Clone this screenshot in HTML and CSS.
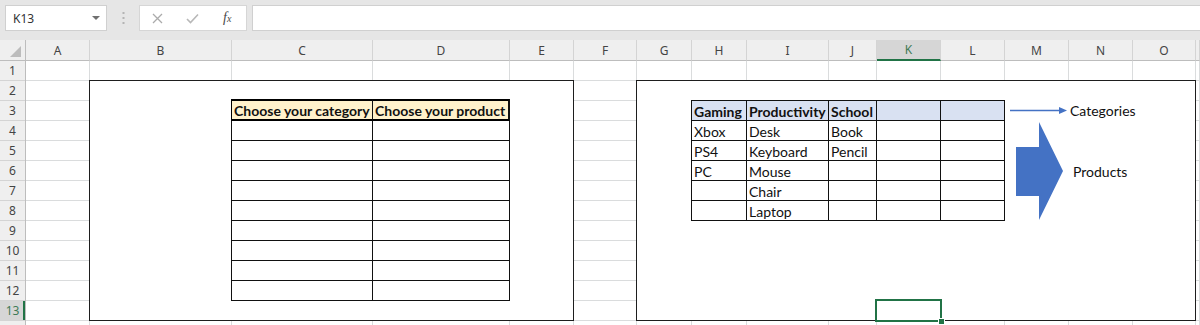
FILE: index.html
```html
<!DOCTYPE html>
<html lang="en">
<head>
    <meta charset="UTF-8">
    <meta name="viewport" content="width=device-width, initial-scale=1.0">
    <title>Category and product picker</title>
    <link rel="stylesheet" href="styles.css">
</head>
<body>
    <div class="toolbar">
        <div class="name-box">
            <span>K13</span>
            <svg class="caret" width="8" height="4" viewBox="0 0 8 4"><path d="M0 0H8L4 4Z" fill="#707070"/></svg>
        </div>
        <div class="grip">
            <svg width="3" height="12" viewBox="0 0 3 12">
                <rect x="0.5" y="0" width="2" height="2" fill="#b4b4b4"/>
                <rect x="0.5" y="5" width="2" height="2" fill="#b4b4b4"/>
                <rect x="0.5" y="10" width="2" height="2" fill="#b4b4b4"/>
            </svg>
        </div>
        <div class="fx-buttons">
            <svg width="11" height="11" viewBox="0 0 11 11"><path d="M1 1L10 10M10 1L1 10" stroke="#ababab" stroke-width="1.3" fill="none"/></svg>
            <svg width="13" height="11" viewBox="0 0 13 11"><path d="M1 6L4.5 9.5L12 1.5" stroke="#b8b8b8" stroke-width="1.6" fill="none"/></svg>
            <span class="fx">f<span>x</span></span>
        </div>
        <div class="formula"></div>
    </div>

    <div class="sheet">
        <div class="corner">
            <svg width="11" height="11" viewBox="0 0 11 11"><path d="M11 0V11H0Z" fill="#bcbcbc"/></svg>
        </div>
        <div class="col-head">A</div>
        <div class="col-head">B</div>
        <div class="col-head">C</div>
        <div class="col-head">D</div>
        <div class="col-head">E</div>
        <div class="col-head">F</div>
        <div class="col-head">G</div>
        <div class="col-head">H</div>
        <div class="col-head">I</div>
        <div class="col-head">J</div>
        <div class="col-head active">K</div>
        <div class="col-head">L</div>
        <div class="col-head">M</div>
        <div class="col-head">N</div>
        <div class="col-head">O</div>
        <div class="col-head"></div>

        <div class="row-heads">
            <div>1</div><div>2</div><div>3</div><div>4</div><div>5</div><div>6</div><div>7</div>
            <div>8</div><div>9</div><div>10</div><div>11</div><div>12</div>
            <div class="active">13</div><div></div>
        </div>

        <div class="col"></div><div class="col"></div><div class="col"></div><div class="col"></div>
        <div class="col"></div><div class="col"></div><div class="col"></div><div class="col"></div>
        <div class="col"></div><div class="col"></div><div class="col"></div><div class="col"></div>
        <div class="col"></div><div class="col"></div><div class="col"></div><div class="col"></div>

        <!-- shapes floating over the grid -->
        <div class="shape shape-left">
            <div class="pick">
                <div class="head">Choose your category</div>
                <div class="head">Choose your product</div>
                <div></div><div></div>
                <div></div><div></div>
                <div></div><div></div>
                <div></div><div></div>
                <div></div><div></div>
                <div></div><div></div>
                <div></div><div></div>
                <div></div><div></div>
                <div></div><div></div>
            </div>
        </div>

        <div class="shape shape-right">
            <div class="lists">
                <div class="head">Gaming</div>
                <div class="head">Productivity</div>
                <div class="head">School</div>
                <div class="head"></div>
                <div class="head"></div>

                <div>Xbox</div><div>Desk</div><div>Book</div><div></div><div></div>
                <div>PS4</div><div>Keyboard</div><div>Pencil</div><div></div><div></div>
                <div>PC</div><div>Mouse</div><div></div><div></div><div></div>
                <div></div><div>Chair</div><div></div><div></div><div></div>
                <div></div><div>Laptop</div><div></div><div></div><div></div>
            </div>
            <div class="legend">
                <div class="legend-row">
                    <svg width="57" height="9" viewBox="0 0 57 9">
                        <path d="M0 4.5H50" stroke="#4472c4" stroke-width="1.5"/>
                        <path d="M49 1L57 4.5L49 8Z" fill="#4472c4"/>
                    </svg>
                    <span>Categories</span>
                </div>
                <div class="legend-row products">
                    <svg width="47" height="99" viewBox="0 0 47 99">
                        <path d="M0 25H23V0L47 49L23 98V74H0Z" fill="#4472c4"/>
                    </svg>
                    <span>Products</span>
                </div>
            </div>
        </div>

        <div class="selection"></div>
    </div>
</body>
</html>
```

FILE: styles.css
```css
body {
    margin: 0;
    width: 1200px;
    height: 325px;
    overflow: hidden;
    background: #e6e6e6;
    font-family: "Noto Sans", "Open Sans", sans-serif;
    color: #333;
}

/* formula bar */
.toolbar {
    height: 40px;
    box-sizing: border-box;
    padding: 5px 0 0 5px;
    display: flex;
    align-items: flex-start;
}

.name-box {
    width: 102px;
    height: 26px;
    box-sizing: border-box;
    background: #fff;
    border: 1px solid #d0d0d0;
    display: flex;
    align-items: center;
    justify-content: space-between;
    padding: 0 6px 0 7px;
    font-size: 12px;
    color: #333;
}

.caret {
    margin-bottom: 1px;
}

.grip {
    width: 32px;
    height: 26px;
    display: flex;
    align-items: center;
    justify-content: center;
}

.fx-buttons {
    width: 108px;
    height: 26px;
    box-sizing: border-box;
    background: #fff;
    border: 1px solid #d6d6d6;
    display: flex;
    align-items: center;
    padding: 0 0 0 12px;
    gap: 23px;
}

.fx {
    font-family: "Liberation Serif", serif;
    font-style: italic;
    font-size: 14px;
    color: #4a4a4a;
    margin-left: 1px;
}

.fx span {
    font-size: 10px;
}

.formula {
    flex: 1;
    height: 26px;
    margin-left: 5px;
    box-sizing: border-box;
    background: #fff;
    border: 1px solid #d0d0d0;
    border-right: none;
}

/* grid */
.sheet {
    position: relative;
    height: 285px;
    display: grid;
    grid-template-columns: 26px 64px 142px 141px 137px 64px 63px 55px 55px 82px 48px 64px 64px 64px 64px 63px 1fr;
    grid-template-rows: 21px 264px;
    background: #fff;
    overflow: hidden;
}

.corner,
.col-head {
    background: #efefef;
    border-bottom: 1px solid #bdbdbd;
    border-right: 1px solid #d4d4d4;
    box-sizing: border-box;
}

.corner {
    display: flex;
    align-items: flex-end;
    justify-content: flex-end;
    padding: 0 4px 3px 0;
    border-right-color: #bdbdbd;
}

.col-head {
    font-size: 12px;
    color: #444;
    text-align: center;
    line-height: 21px;
}

.col-head.active {
    background: #d6d6d6;
    color: #3f7a55;
    border-bottom: 2px solid #217346;
    line-height: 20px;
}

.row-heads {
    background: #efefef;
    border-right: 1px solid #bdbdbd;
    overflow: hidden;
}

.row-heads div {
    height: 20px;
    box-sizing: border-box;
    border-bottom: 1px solid #d4d4d4;
    font-size: 12px;
    color: #444;
    text-align: center;
    line-height: 20px;
}

.row-heads .active {
    background: #d6d6d6;
    color: #3f7a55;
    box-shadow: inset -2px 0 0 #217346;
}

.col {
    border-right: 1px solid #dadcdd;
    background: repeating-linear-gradient(#fff 0 19px, #dadcdd 19px 20px);
}

/* floating text boxes */
.shape {
    position: absolute;
    top: 40px;
    height: 241px;
    box-sizing: border-box;
    background: #fff;
    border: 1px solid #1e1e1e;
    display: flex;
    align-items: flex-start;
    font-family: Lato, "Open Sans", sans-serif;
    font-size: 14px;
    color: #111;
}

.shape-left {
    left: 89px;
    width: 485px;
    padding: 18px 0 0 141px;
}

.shape-right {
    left: 636px;
    width: 560px;
    padding: 19px 0 0 54px;
}

.pick {
    display: grid;
    grid-template-columns: 141px 137px;
    grid-template-rows: 22px;
    grid-auto-rows: 20px;
    border-left: 1px solid #111;
}

.pick div,
.lists div {
    box-sizing: border-box;
    border-right: 1px solid #111;
    border-bottom: 1px solid #111;
    padding: 1px 0 0 2px;
    line-height: 19px;
    white-space: nowrap;
}

.pick .head {
    background: #fff2cc;
    font-weight: bold;
    border-top: 2px solid #000;
    border-bottom: 2px solid #000;
    padding-top: 1px;
    line-height: 17px;
}

.pick .head:first-child {
    box-shadow: -1px 0 0 #000;
}

.pick .head:nth-child(2) {
    border-right-width: 2px;
}

.lists {
    display: grid;
    grid-template-columns: 55px 82px 48px 64px 64px;
    grid-auto-rows: 20px;
    border-left: 1px solid #111;
    border-top: 1px solid #111;
}

.lists .head {
    background: #d9e1f2;
    font-weight: bold;
}

.legend {
    margin-left: 5px;
    display: flex;
    flex-direction: column;
}

.legend-row {
    display: flex;
    align-items: center;
    gap: 3px;
    height: 21px;
}

.legend-row.products {
    height: auto;
    margin-top: 1px;
    padding-left: 6px;
    gap: 10px;
}

.legend-row svg {
    display: block;
}

/* active cell K13 */
.selection {
    position: absolute;
    left: 875px;
    top: 259px;
    width: 67px;
    height: 23px;
    box-sizing: border-box;
    border: 2px solid #217346;
}

.selection::after {
    content: "";
    position: absolute;
    right: -4px;
    bottom: -4px;
    width: 5px;
    height: 5px;
    background: #217346;
    box-shadow: 0 0 0 1px #fff;
}
```
